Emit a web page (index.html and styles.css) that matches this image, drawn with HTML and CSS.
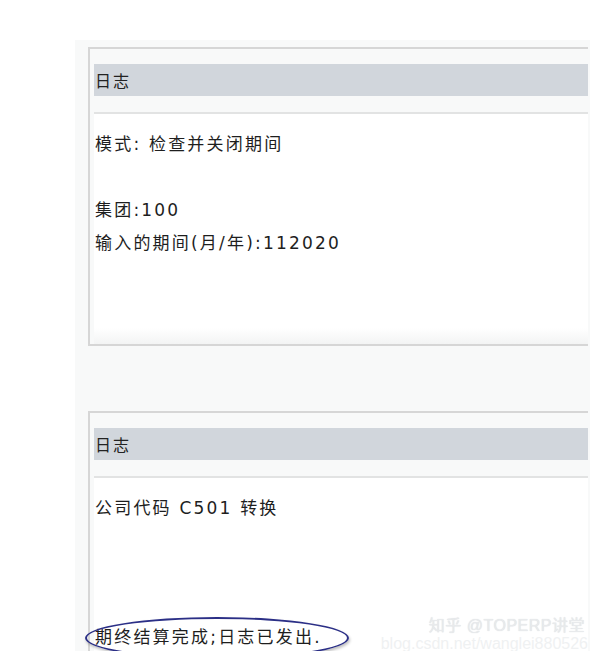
FILE: index.html
```html
<!DOCTYPE html>
<html lang="zh">
<head>
<meta charset="utf-8">
<link rel="stylesheet" href="styles.css">
</head>
<body>
<div class="canvas">
  <section class="panel">
    <div class="head">日志</div>
    <div class="rule"></div>
    <div class="body body-1">
      <p>模式: 检查并关闭期间</p>
      <p>&nbsp;</p>
      <p>集团:100</p>
      <p>输入的期间(月/年):112020</p>
    </div>
    <div class="fade"></div>
  </section>
  <section class="panel panel-2">
    <div class="head">日志</div>
    <div class="rule"></div>
    <div class="body body-2">
      <p>公司代码 C501 转换</p>
      <p class="done">期终结算完成;日志已发出.<span class="ring"></span></p>
    </div>
  </section>
  <div class="mark">
    <span class="mark-a">知乎 @TOPERP讲堂</span>
    <span class="mark-b">blog.csdn.net/wanglei880526</span>
  </div>
</div>
</body>
</html>
```
FILE: styles.css
```css
html, body {
  margin: 0;
  padding: 0;
  background: #ffffff;
  overflow: hidden;
}
body {
  font-family: "DejaVu Sans", "Noto Sans CJK SC", sans-serif;
  color: #1e1e1e;
}
.canvas {
  position: relative;
  margin: 40px 0 0 75px;
  width: 515px;
  height: 611px;
  background: #f8f9f9;
  padding: 7px 0 0 13px;
  box-sizing: border-box;
  overflow: hidden;
}
.panel {
  width: 500px;
  border-top: 2px solid #d6d6d6;
  border-left: 2px solid #d6d6d6;
  border-bottom: 2px solid #d6d6d6;
  background: #f8f9f9;
  padding: 15px 0 0 4px;
  box-sizing: border-box;
}
.panel-2 {
  margin-top: 65px;
  border-bottom: none;
}
.head {
  height: 32px;
  line-height: 32px;
  background: #d1d6dc;
  font-family: "Noto Sans CJK SC", sans-serif;
  font-size: 16px;
  letter-spacing: 2px;
  padding-left: 1px;
  color: #222;
}
.rule {
  height: 2px;
  background: #e2e3e3;
  margin-top: 16px;
}
.body {
  background: #ffffff;
  padding: 14px 0 0 1px;
  font-size: 17px;
  letter-spacing: 2.2px;
}
.body p {
  margin: 0;
  height: 33px;
  line-height: 33px;
  white-space: nowrap;
}
.body-1 {
  height: 200px;
}
.fade {
  height: 16px;
  background: linear-gradient(#ffffff, #f3f4f4);
}
.body-2 {
  height: 200px;
}
.body-2 .done {
  position: relative;
  margin-top: 96px;
  display: inline-block;
}
.ring {
  position: absolute;
  left: -10px;
  top: -4px;
  width: 260px;
  height: 38px;
  border: 2px solid #2b2f86;
  border-radius: 50%;
  box-shadow: 1px 2px 3px rgba(0, 0, 0, 0.25);
}
.mark {
  position: absolute;
  left: 335px;
  top: 572px;
  display: flex;
  flex-direction: column;
  align-items: flex-end;
  width: 175px;
  font-family: "Liberation Sans", "Noto Sans CJK SC", sans-serif;
}
.mark-a {
  font-size: 16px;
  letter-spacing: 0.5px;
  color: #e8eaec;
  text-shadow: 0 0 1px #d6d9dc;
}
.mark-b {
  font-size: 16px;
  line-height: 18px;
  color: #eff1f2;
  margin-top: -1px;
  margin-right: -3px;
}
```
